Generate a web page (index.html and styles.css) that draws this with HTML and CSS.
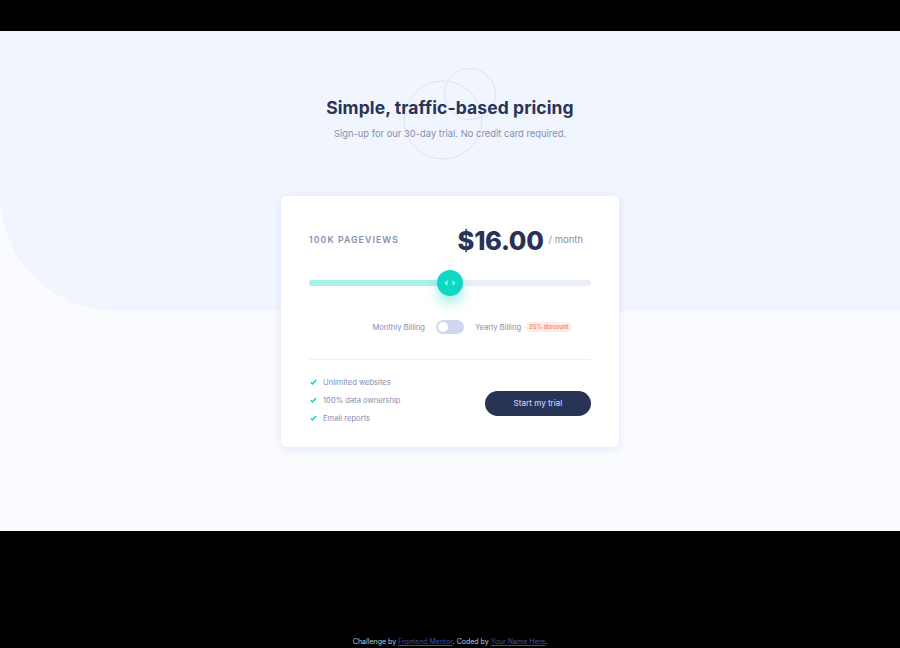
FILE: index.html
```html
<!DOCTYPE html>
<html lang="en">
<head>
<meta charset="utf-8">
<title>Pricing</title>
<link rel="stylesheet" href="styles.css">
</head>
<body>
<main class="page">
  <div class="bg-shape"></div>
  <svg class="circles" width="110" height="110" viewBox="0 0 110 110">
    <circle cx="43" cy="64" r="39" fill="none" stroke="#dde3f3" stroke-width="1"/>
    <circle cx="70" cy="38" r="25.5" fill="none" stroke="#dde3f3" stroke-width="1"/>
  </svg>
  <header class="hero">
    <h1 class="title">Simple, traffic-based pricing</h1>
    <p class="subtitle">Sign-up for our 30-day trial. No credit card required.</p>
  </header>

  <section class="card">
    <div class="top-row">
      <span class="views">100K Pageviews</span>
      <div class="price-group">
        <span class="price">$16.00</span>
        <span class="per">/ month</span>
      </div>
    </div>

    <div class="slider">
      <div class="track">
        <div class="fill" style="width: 50%"></div>
      </div>
      <div class="thumb" style="left: 50%">
        <svg width="12" height="8" viewBox="0 0 12 8">
          <path d="M3.5 1 L0.5 4 L3.5 7 Z M8.5 1 L11.5 4 L8.5 7 Z" fill="#80fff3"/>
        </svg>
      </div>
    </div>

    <div class="billing">
      <span class="bill-label left">Monthly Billing</span>
      <span class="toggle"><span class="knob"></span></span>
      <span class="bill-right">
        <span class="bill-label">Yearly Billing</span>
        <span class="badge">25% discount</span>
      </span>
    </div>

    <hr class="divider">

    <div class="bottom-row">
      <ul class="features">
        <li><svg class="check" width="7" height="6" viewBox="0 0 9 8"><path d="M1 4.3 L3.2 6.5 L8 1.2" fill="none" stroke="#10d8c4" stroke-width="2"/></svg>Unlimited websites</li>
        <li><svg class="check" width="7" height="6" viewBox="0 0 9 8"><path d="M1 4.3 L3.2 6.5 L8 1.2" fill="none" stroke="#10d8c4" stroke-width="2"/></svg>100% data ownership</li>
        <li><svg class="check" width="7" height="6" viewBox="0 0 9 8"><path d="M1 4.3 L3.2 6.5 L8 1.2" fill="none" stroke="#10d8c4" stroke-width="2"/></svg>Email reports</li>
      </ul>
      <button class="cta">Start my trial</button>
    </div>
  </section>
</main>
<footer class="attribution">
  Challenge by <a href="#">Frontend Mentor</a>. Coded by <a href="#">Your Name Here</a>.
</footer>
</body>
</html>
```

FILE: styles.css
```css
* { box-sizing: border-box; }

html, body {
  margin: 0;
  padding: 0;
  background: #000;
  font-family: "Inter", "Noto Sans", sans-serif;
}

.page {
  position: relative;
  margin-top: 31px;
  height: 500px;
  background: #fafbff;
  overflow: hidden;
  display: flex;
  flex-direction: column;
  align-items: center;
}

.bg-shape {
  position: absolute;
  top: 0;
  left: 0;
  right: 0;
  height: 280px;
  background: #f1f5fe;
  border-bottom-left-radius: 116px;
}

.circles {
  position: absolute;
  top: 25px;
  left: 400px;
}

.hero {
  position: relative;
  text-align: center;
  padding-top: 65px;
}

.title {
  margin: 0;
  font-size: 17.5px;
  line-height: 24px;
  font-weight: 700;
  color: #293356;
  letter-spacing: 0.1px;
}

.subtitle {
  margin: 7px 0 0;
  font-size: 9.4px;
  line-height: 14px;
  color: #858fad;
}

.card {
  position: relative;
  margin-top: 55px;
  width: 338px;
  background: #fff;
  border-radius: 5px;
  box-shadow: 0 2px 8px rgba(180, 195, 230, 0.35);
  padding: 27px 28px 20px;
}

.top-row {
  display: flex;
  justify-content: space-between;
  align-items: center;
  height: 34px;
}

.views {
  text-transform: uppercase;
  font-size: 8.7px;
  font-weight: 600;
  letter-spacing: 1.1px;
  color: #858fad;
}

.price-group {
  display: flex;
  align-items: center;
  gap: 5px;
  margin-right: 8px;
}

.price {
  font-size: 25.5px;
  font-weight: 800;
  color: #293356;
  letter-spacing: -0.3px;
}

.per {
  font-size: 9.5px;
  color: #858fad;
  margin-top: -2px;
}

.slider {
  position: relative;
  margin-top: 13px;
  height: 26px;
  display: flex;
  align-items: center;
}

.track {
  width: 100%;
  height: 6px;
  border-radius: 3px;
  background: #eaeefb;
  overflow: hidden;
}

.fill {
  height: 100%;
  background: #a5f3eb;
}

.thumb {
  position: absolute;
  top: 0;
  width: 26px;
  height: 26px;
  margin-left: -13px;
  border-radius: 50%;
  background: #10d8c4;
  box-shadow: 0 8px 12px rgba(16, 216, 196, 0.35);
  display: flex;
  align-items: center;
  justify-content: center;
}

.billing {
  margin-top: 24px;
  display: grid;
  grid-template-columns: 1fr auto 1fr;
  align-items: center;
  column-gap: 11px;
  height: 14px;
}

.bill-label {
  font-size: 7.6px;
  color: #858fad;
}

.bill-label.left {
  justify-self: end;
}

.bill-right {
  display: flex;
  align-items: center;
  gap: 4px;
}

.toggle {
  width: 28px;
  height: 14px;
  border-radius: 7px;
  background: #cfd8ef;
  padding: 2px;
  display: flex;
}

.knob {
  width: 10px;
  height: 10px;
  border-radius: 50%;
  background: #fff;
}

.badge {
  font-size: 5.8px;
  font-weight: 700;
  color: #ff8d68;
  background: #feede8;
  border-radius: 6px;
  padding: 1px 4px;
  line-height: 8px;
}

.divider {
  margin: 25px 0 0;
  border: 0;
  border-top: 1px solid #ecf0fb;
}

.bottom-row {
  margin-top: 13px;
  display: flex;
  justify-content: space-between;
  align-items: center;
}

.features {
  list-style: none;
  margin: 0;
  padding: 0;
}

.features li {
  display: flex;
  align-items: center;
  height: 18px;
  font-size: 7.6px;
  color: #858fad;
}

.check {
  margin-left: 1px;
  margin-right: 6px;
}

.cta {
  width: 106px;
  height: 25px;
  margin-top: 6px;
  border: 0;
  border-radius: 13px;
  background: #293356;
  color: #bdccff;
  font-family: inherit;
  font-size: 8px;
  font-weight: 500;
}

.attribution {
  margin-top: 105px;
  text-align: center;
  font-size: 7px;
  line-height: 12px;
  color: #c3c8dc;
}

.attribution a {
  color: #3e52a3;
}
```
